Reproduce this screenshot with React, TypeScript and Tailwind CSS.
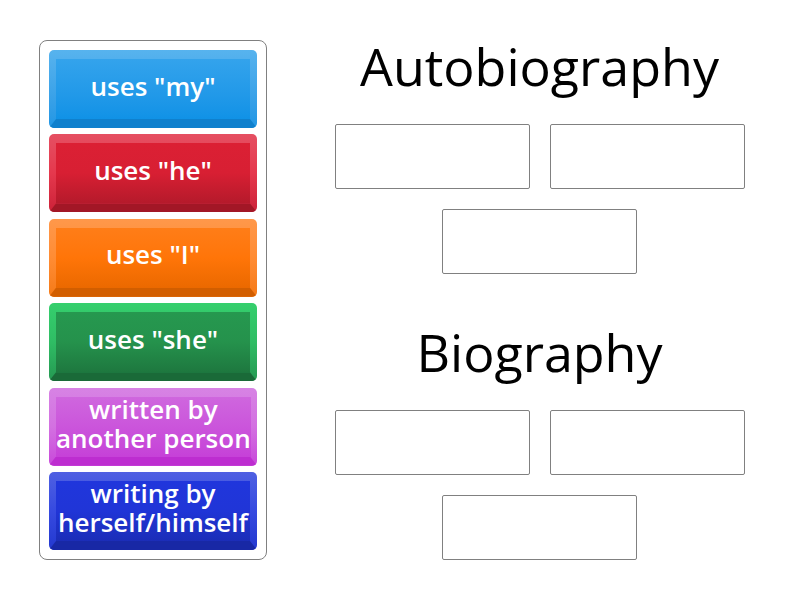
/**
 * Group Sort
 * Drag the cards on the left into the matching group
 */

import React from 'react';

interface Card {
  id: number;
  lines: string[];
  frame: string;
  face: string;
  base: string;
}

interface Group {
  id: number;
  title: string;
  slots: number;
}

const cards: Card[] = [
  {
    id: 1,
    lines: ['uses "my"'],
    frame: 'from-[#57b3ee] to-[#2096e4]',
    face: 'from-[#33a3ec] to-[#1092e6]',
    base: 'bg-[#0f80cd]',
  },
  {
    id: 2,
    lines: ['uses "he"'],
    frame: 'from-[#e54f62] via-[#e5384d] to-[#cc2138]',
    face: 'from-[#db2034] via-[#d81f33] to-[#b51a2b]',
    base: 'bg-[#a21726]',
  },
  {
    id: 3,
    lines: ['uses "I"'],
    frame: 'from-[#ff984a] via-[#ff8c33] to-[#f57a14]',
    face: 'from-[#ff7d17] via-[#ff7508] to-[#eb6900]',
    base: 'bg-[#d25e00]',
  },
  {
    id: 4,
    lines: ['uses "she"'],
    frame: 'from-[#35cf6d] via-[#2fbd64] to-[#259852]',
    face: 'from-[#26984f] via-[#25924c] to-[#1e783f]',
    base: 'bg-[#1a6a38]',
  },
  {
    id: 5,
    lines: ['written by', 'another person'],
    frame: 'from-[#d783e4] via-[#d370e1] to-[#c846da]',
    face: 'from-[#cf66de] to-[#c641d8]',
    base: 'bg-[#bd2dd0]',
  },
  {
    id: 6,
    lines: ['writing by', 'herself/himself'],
    frame: 'from-[#4f60e2] via-[#364ae0] to-[#2338cf]',
    face: 'from-[#2036dc] via-[#2035d7] to-[#1b2db8]',
    base: 'bg-[#1828a5]',
  },
];

const groups: Group[] = [
  { id: 1, title: 'Autobiography', slots: 3 },
  { id: 2, title: 'Biography', slots: 3 },
];

const SortCard: React.FC<{ card: Card }> = ({ card }) => (
  <button
    type="button"
    className={`relative flex h-[78px] w-full cursor-grab overflow-hidden rounded-[5px] bg-linear-to-b px-[7px] py-[9px] ${card.frame}`}
  >
    {/* Bottom edge of the bevel */}
    <span
      className={`absolute inset-x-0 bottom-0 h-[9px] [clip-path:polygon(7px_0,calc(100%-7px)_0,100%_100%,0_100%)] ${card.base}`}
    />
    <span
      className={`flex h-full flex-1 flex-col items-center justify-center bg-linear-to-b pb-1.5 text-[26px] leading-[29px] font-semibold whitespace-nowrap text-white ${card.face}`}
    >
      {card.lines.map((line) => (
        <span key={line}>{line}</span>
      ))}
    </span>
  </button>
);

const GroupSection: React.FC<{ group: Group }> = ({ group }) => (
  <section>
    <h2 className="mb-8 text-center text-[52px] leading-[52px] text-black">
      {group.title}
    </h2>
    <div className="flex flex-wrap justify-center gap-5">
      {Array.from({ length: group.slots }, (_, i) => (
        <div
          key={i}
          className="h-[65px] w-[195px] rounded-xs border border-[#808080] bg-white"
        />
      ))}
    </div>
  </section>
);

export default function App() {
  return (
    <main className="flex min-h-screen bg-white py-10 pr-[41px] pl-[39px] font-['Open_Sans',sans-serif]">
      {/* Cards */}
      <div className="flex w-[228px] shrink-0 flex-col justify-between gap-1 rounded-lg border border-[#808080] p-[9px]">
        {cards.map((card) => (
          <SortCard key={card.id} card={card} />
        ))}
      </div>

      {/* Groups */}
      <div className="ml-[53px] flex flex-1 flex-col justify-between gap-5">
        {groups.map((group) => (
          <GroupSection key={group.id} group={group} />
        ))}
      </div>
    </main>
  );
}
